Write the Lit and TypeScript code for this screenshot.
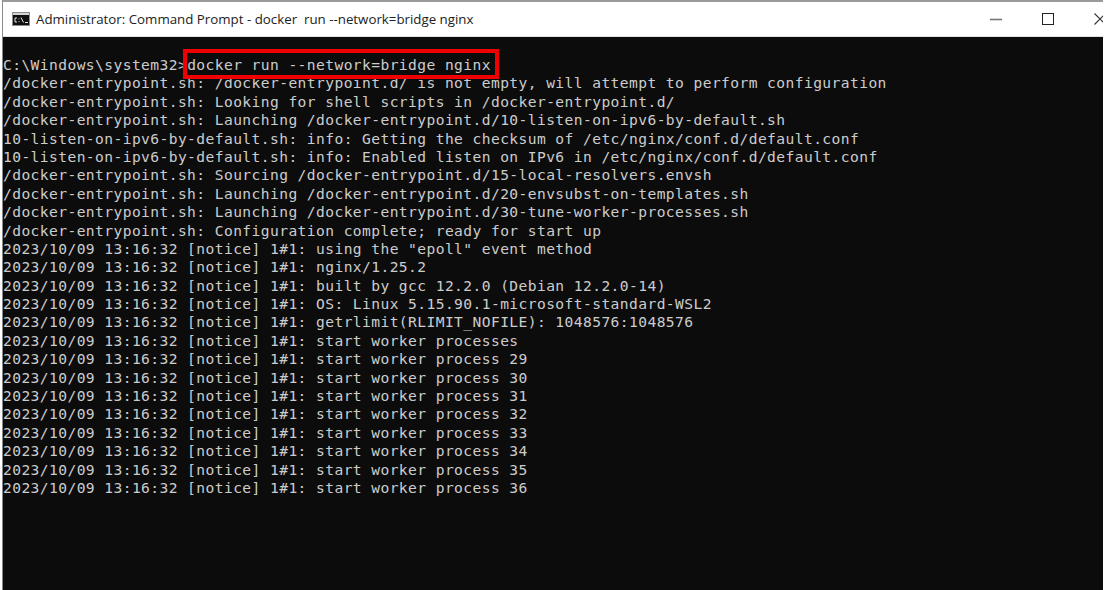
import { LitElement, html, css } from "lit";
import { customElement } from "lit/decorators.js";

const LINES = [
  "/docker-entrypoint.sh: /docker-entrypoint.d/ is not empty, will attempt to perform configuration",
  "/docker-entrypoint.sh: Looking for shell scripts in /docker-entrypoint.d/",
  "/docker-entrypoint.sh: Launching /docker-entrypoint.d/10-listen-on-ipv6-by-default.sh",
  "10-listen-on-ipv6-by-default.sh: info: Getting the checksum of /etc/nginx/conf.d/default.conf",
  "10-listen-on-ipv6-by-default.sh: info: Enabled listen on IPv6 in /etc/nginx/conf.d/default.conf",
  "/docker-entrypoint.sh: Sourcing /docker-entrypoint.d/15-local-resolvers.envsh",
  "/docker-entrypoint.sh: Launching /docker-entrypoint.d/20-envsubst-on-templates.sh",
  "/docker-entrypoint.sh: Launching /docker-entrypoint.d/30-tune-worker-processes.sh",
  "/docker-entrypoint.sh: Configuration complete; ready for start up",
  ...[
    'using the "epoll" event method',
    "nginx/1.25.2",
    "built by gcc 12.2.0 (Debian 12.2.0-14)",
    "OS: Linux 5.15.90.1-microsoft-standard-WSL2",
    "getrlimit(RLIMIT_NOFILE): 1048576:1048576",
    "start worker processes",
    "start worker process 29",
    "start worker process 30",
    "start worker process 31",
    "start worker process 32",
    "start worker process 33",
    "start worker process 34",
    "start worker process 35",
    "start worker process 36",
  ].map((m) => `2023/10/09 13:16:32 [notice] 1#1: ${m}`),
];

@customElement("app-root")
export class AppRoot extends LitElement {
  static styles = css`
    :host {
      display: block;
      width: 1104px;
      height: 590px;
      overflow: hidden;
      background: #fff;
    }
    .window {
      height: 590px;
      box-sizing: border-box;
      margin-left: 2px;
      margin-right: 1px;
      padding-top: 2px;
      border-left: 1px solid #8a8a8a;
      display: flex;
      flex-direction: column;
      box-shadow: inset 0 2px 0 #9a9a9a;
    }
    .titlebar {
      height: 34px;
      flex: none;
      display: flex;
      align-items: center;
      padding-left: 9px;
      background: #fff;
      overflow: hidden;
      border-bottom: 1px solid #e2e2e2;
    }
    .app-icon {
      flex: none;
      margin-right: 6px;
    }
    .title {
      flex: 1;
      font: 13.3px "Open Sans", "Noto Sans", sans-serif;
      color: #222;
      white-space: pre;
    }
    .controls {
      flex: none;
      display: flex;
      align-items: center;
      gap: 40px;
      margin-right: -3px;
    }
    .controls svg {
      display: block;
    }
    .console {
      flex: 1;
      background: #0c0c0c;
      color: #cccccc;
      font: 14.6px/18.4px "DejaVu Sans Mono", monospace;
      letter-spacing: 0.42px;
      padding-top: 19px;
      overflow: hidden;
    }
    .line {
      height: 18.4px;
      white-space: pre;
    }
    .cmd {
      padding: 3px 4px 2px 0;
      outline: 4px solid #f00000;
    }
  `;

  render() {
    return html`
      <div class="window">
        <div class="titlebar">
          <svg class="app-icon" width="18" height="14" viewBox="0 0 18 14">
            <rect width="18" height="14" fill="#8c8c8c" />
            <rect x="1" y="1" width="16" height="2" fill="#d4d4d4" />
            <rect x="1" y="3" width="16" height="10" fill="#101010" />
            <path d="M5 6H3v4h2M7 6.5v.8M7 9v.8M9 5.5l2.5 5M13 10.5h3" stroke="#e8e8e8" fill="none" />
          </svg>
          <span class="title">Administrator: Command Prompt - docker  run --network=bridge nginx</span>
          <div class="controls">
            <svg width="12" height="12" viewBox="0 0 12 12">
              <path d="M0 6.5h12" stroke="#777" stroke-width="1.6" />
            </svg>
            <svg width="12" height="12" viewBox="0 0 12 12">
              <rect x="0.5" y="0.5" width="11" height="11" fill="none" stroke="#222" stroke-width="1" />
            </svg>
            <svg width="12" height="12" viewBox="0 0 12 12">
              <path d="M0.5 0.5l11 11M11.5 0.5l-11 11" stroke="#333" stroke-width="1.1" fill="none" />
            </svg>
          </div>
        </div>
        <div class="console">
          <div class="line">C:\\Windows\\system32&gt;<span class="cmd">docker run --network=bridge nginx</span></div>
          ${LINES.map((l) => html`<div class="line">${l}</div>`)}
        </div>
      </div>
    `;
  }
}
